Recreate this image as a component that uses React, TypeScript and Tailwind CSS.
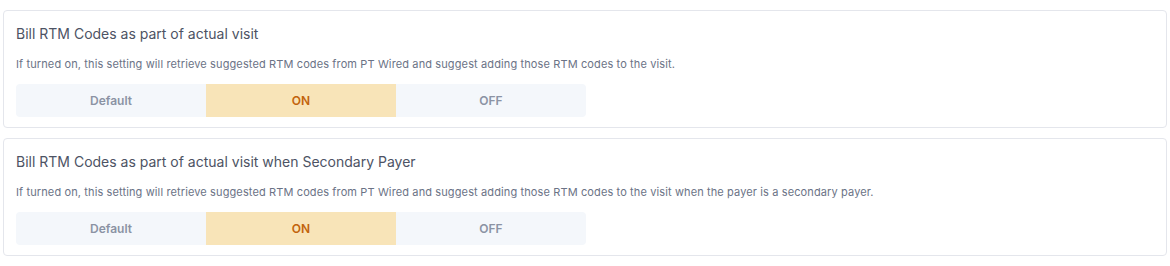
import React, { useState } from 'react'

type Mode = 'Default' | 'ON' | 'OFF'

interface SettingCardProps {
  title: string
  description: string
  initial: Mode
}

const options: Mode[] = ['Default', 'ON', 'OFF']

const SettingCard: React.FC<SettingCardProps> = ({ title, description, initial }) => {
  const [mode, setMode] = useState<Mode>(initial)

  return (
    <div className="rounded-[4px] border border-[#e4e6ec] bg-white px-3 pt-3 pb-[10px]">
      <h3 className="text-[14px] leading-[22px] text-[#4d5364]">{title}</h3>
      <p className="mt-[11px] text-[11px] leading-4 tracking-[0.12px] text-[#6b7386]">
        {description}
      </p>
      <div className="mt-3 flex w-[570px] overflow-hidden rounded-[4px] bg-[#f4f7fb]">
        {options.map((opt) => (
          <button
            key={opt}
            onClick={() => setMode(opt)}
            className={`h-[33px] flex-1 text-[12px] font-semibold ${
              mode === opt ? 'bg-[#f8e4b8] text-[#c2630c]' : 'text-[#8b93a4]'
            }`}
          >
            {opt}
          </button>
        ))}
      </div>
    </div>
  )
}

export default function App() {
  return (
    <div
      className="flex flex-col gap-[10px] bg-white px-[3px] pt-[10px]"
      style={{ fontFamily: 'Inter, "Noto Sans", sans-serif' }}
    >
      <SettingCard
        title="Bill RTM Codes as part of actual visit"
        description="If turned on, this setting will retrieve suggested RTM codes from PT Wired and suggest adding those RTM codes to the visit."
        initial="ON"
      />
      <SettingCard
        title="Bill RTM Codes as part of actual visit when Secondary Payer"
        description="If turned on, this setting will retrieve suggested RTM codes from PT Wired and suggest adding those RTM codes to the visit when the payer is a secondary payer."
        initial="ON"
      />
    </div>
  )
}
